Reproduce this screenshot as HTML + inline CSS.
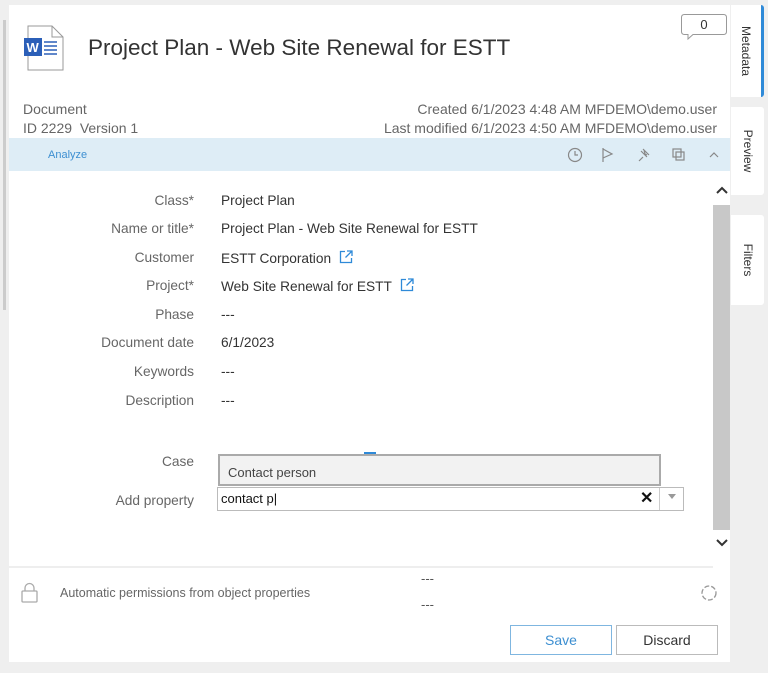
<!DOCTYPE html>
<html><head><meta charset="utf-8"><style>
*{margin:0;padding:0;box-sizing:border-box}
body{width:768px;height:673px;background:#efefef;font-family:"Liberation Sans",sans-serif;position:relative;overflow:hidden;color:#333}
.abs{position:absolute}
.main{left:9px;top:5px;width:721px;height:657px;background:#fff}
.lbl{position:absolute;right:574px;font-size:13.7px;color:#666;text-align:right;white-space:nowrap}
.val{position:absolute;left:221px;font-size:13.7px;color:#333;white-space:nowrap}
.tab{position:absolute;left:731px;width:33px;background:#fff;border-radius:0 3px 3px 0}
.tab span{position:absolute;left:50%;top:50%;transform:translate(-50%,-50%) rotate(90deg);font-size:12px;color:#333;white-space:nowrap}
.ext{display:inline-block;margin-left:8px;vertical-align:-1px}
</style></head><body>
<div class="abs" style="left:3px;top:20px;width:3px;height:290px;background:#ccc"></div>
<div class="abs main"></div>
<svg class="abs" style="left:23px;top:25px" width="42" height="46" viewBox="0 0 42 46">
<path d="M5 1H29L40 12V45H5Z" fill="#fff" stroke="#999"/><path d="M29 1V12H40" fill="none" stroke="#999"/>
<rect x="1" y="13" width="18" height="18" fill="#2b5fb8"/><text x="3.5" y="27" font-size="13" font-weight="bold" fill="#fff" font-family="Liberation Sans">W</text>
<g stroke="#2b5fb8" stroke-width="1.5"><line x1="21" y1="17" x2="34" y2="17"/><line x1="21" y1="21" x2="34" y2="21"/><line x1="21" y1="25" x2="34" y2="25"/><line x1="21" y1="29" x2="34" y2="29"/></g></svg>
<div class="abs" style="left:88px;top:35px;font-size:22.5px;color:#333">Project Plan - Web Site Renewal for ESTT</div>
<svg class="abs" style="left:681px;top:14px" width="46" height="26" viewBox="0 0 46 26"><path d="M3.5 0.5H42.5Q45.5 0.5 45.5 3.5V17.5Q45.5 20.5 42.5 20.5H12L7 25V20.5H3.5Q0.5 20.5 0.5 17.5V3.5Q0.5 0.5 3.5 0.5Z" fill="#fff" stroke="#999"/><text x="23" y="15" font-size="13" text-anchor="middle" fill="#333" font-family="Liberation Sans">0</text></svg>
<div class="abs" style="left:23px;top:100px;font-size:14px;color:#666;line-height:19px">Document<br>ID 2229&nbsp; Version 1</div>
<div class="abs" style="right:51px;top:100px;font-size:14px;color:#666;line-height:19px;text-align:right">Created 6/1/2023 4:48 AM MFDEMO\demo.user<br>Last modified 6/1/2023 4:50 AM MFDEMO\demo.user</div>
<div class="abs" style="left:9px;top:138px;width:721px;height:33px;background:#deedf6"></div>
<div class="abs" style="left:48px;top:149px;font-size:11px;color:#3d8fd1">Analyze</div>
<svg class="abs" style="left:565px;top:145px" width="160" height="20" viewBox="0 0 160 20" fill="none" stroke="#888" stroke-width="1.2">
<circle cx="10" cy="10" r="6.5"/><path d="M10 6V10H13"/>
<path d="M38 3V17M38 4L47 9L38 13"/>
<path d="M74 16L78 12M76 6L82 12M78 4L84 10M79 5L80 9L82 10"/>
<rect x="108" y="4" width="8" height="8"/><rect x="111" y="7" width="8" height="8"/>
<path d="M145 12L149 8L153 12"/></svg>
<div class="tab" style="top:5px;height:92px;border-right:3px solid #2f8ad8"><span>Metadata</span></div>
<div class="tab" style="top:107px;height:88px"><span>Preview</span></div>
<div class="tab" style="top:215px;height:90px"><span>Filters</span></div>
<div class="abs" style="left:713px;top:205px;width:17px;height:325px;background:#c8c8c8"></div>
<svg class="abs" style="left:714px;top:184px" width="16" height="12"><path d="M3 9L8 4L13 9" stroke="#333" stroke-width="2" fill="none"/></svg>
<svg class="abs" style="left:714px;top:537px" width="16" height="12"><path d="M3 3L8 8L13 3" stroke="#333" stroke-width="2" fill="none"/></svg>
<div class="lbl" style="top:193px">Class*</div><div class="val" style="top:193px">Project Plan</div>
<div class="lbl" style="top:221px">Name or title*</div><div class="val" style="top:221px">Project Plan - Web Site Renewal for ESTT</div>
<div class="lbl" style="top:250px">Customer</div><div class="val" style="top:250px">ESTT Corporation<svg class="ext" width="14" height="14" viewBox="0 0 14 14" fill="none" stroke="#2f8ad8" stroke-width="1.3"><path d="M6 1.5H1.5V12.5H12.5V8"/><path d="M8 1H13V6M13 1L6.5 7.5"/></svg></div>
<div class="lbl" style="top:278px">Project*</div><div class="val" style="top:278px">Web Site Renewal for ESTT<svg class="ext" width="14" height="14" viewBox="0 0 14 14" fill="none" stroke="#2f8ad8" stroke-width="1.3"><path d="M6 1.5H1.5V12.5H12.5V8"/><path d="M8 1H13V6M13 1L6.5 7.5"/></svg></div>
<div class="lbl" style="top:307px">Phase</div><div class="val" style="top:307px">---</div>
<div class="lbl" style="top:335px">Document date</div><div class="val" style="top:335px">6/1/2023</div>
<div class="lbl" style="top:364px">Keywords</div><div class="val" style="top:364px">---</div>
<div class="lbl" style="top:393px">Description</div><div class="val" style="top:393px">---</div>
<div class="lbl" style="top:454px">Case</div>
<div class="lbl" style="top:493px">Add property</div>
<div class="abs" style="left:364px;top:452px;width:12px;height:2px;background:#2f8ad8"></div>
<div class="abs" style="left:218px;top:454px;width:443px;height:32px;background:#f2f2f2;border:2px solid #aaa;font-size:13px;color:#444;padding:9px 0 0 8px">Contact person</div>
<div class="abs" style="left:217px;top:487px;width:467px;height:24px;border:1px solid #bbb;background:#fff;font-size:13px;color:#111;padding:3px 0 0 3px">contact p|</div>
<div class="abs" style="left:640px;top:488px;font-size:16px;font-weight:bold;color:#111">✕</div>
<div class="abs" style="left:659px;top:488px;width:1px;height:22px;background:#ccc"></div>
<div class="abs" style="left:668px;top:494px;border:4px solid transparent;border-top:5px solid #999"></div>
<div class="abs" style="left:9px;top:566px;width:704px;height:2px;background:#eee"></div>
<svg class="abs" style="left:20px;top:582px" width="20" height="22" fill="none" stroke="#aaa" stroke-width="1.3"><rect x="2" y="9" width="15" height="11" rx="1"/><path d="M5 9V6a4.5 4.5 0 0 1 9 0V9"/></svg>
<div class="abs" style="left:60px;top:586px;font-size:12.5px;color:#666">Automatic permissions from object properties</div>
<div class="abs" style="left:421px;top:571px;font-size:13px;color:#555">---</div>
<div class="abs" style="left:421px;top:597px;font-size:13px;color:#555">---</div>
<svg class="abs" style="left:699px;top:583px" width="20" height="20" fill="none" stroke="#999" stroke-width="1.3"><circle cx="10" cy="10" r="7" stroke-dasharray="5 2"/></svg>
<div class="abs" style="left:510px;top:625px;width:102px;height:30px;border:1px solid #7fb6e0;font-size:14px;color:#3d8fd1;text-align:center;line-height:28px">Save</div>
<div class="abs" style="left:616px;top:625px;width:102px;height:30px;border:1px solid #bbb;font-size:14px;color:#333;text-align:center;line-height:28px">Discard</div>
</body></html>
